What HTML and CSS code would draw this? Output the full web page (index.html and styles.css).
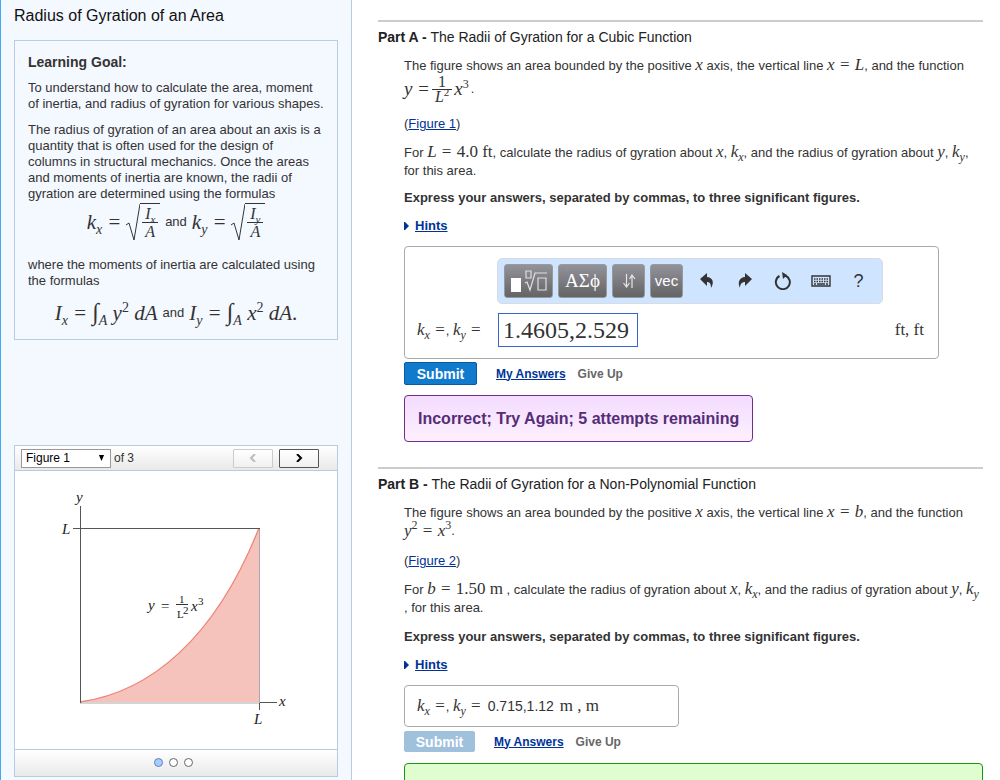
FILE: index.html
```html
<!DOCTYPE html>
<html lang="en">
<head>
<meta charset="utf-8">
<title>Radius of Gyration of an Area</title>
<link rel="stylesheet" href="styles.css">
</head>
<body>
<div class="app">
  <aside class="sidebar">
    <h1 class="title">Radius of Gyration of an Area</h1>
    <section class="goal">
      <h2 class="goal-title">Learning Goal:</h2>
      <p class="goal-text">To understand how to calculate the area, moment<br>of inertia, and radius of gyration for various shapes.</p>
      <p class="goal-text last">The radius of gyration of an area about an axis is a<br>quantity that is often used for the design of<br>columns in structural mechanics. Once the areas<br>and moments of inertia are known, the radii of<br>gyration are determined using the formulas</p>
      <div class="formula">
        <span class="math big"><i>k<sub>x</sub></i> <span class="rel">=</span></span>
        <span class="root"><svg class="radical" viewBox="0 0 14 38"><path d="M0 22l3-2 5 17L14 1" /></svg><span class="frac"><i>I<sub>x</sub></i><i>A</i></span></span>
        <span>and</span>
        <span class="math big"><i>k<sub>y</sub></i> <span class="rel">=</span></span>
        <span class="root"><svg class="radical" viewBox="0 0 14 38"><path d="M0 22l3-2 5 17L14 1" /></svg><span class="frac"><i>I<sub>y</sub></i><i>A</i></span></span>
      </div>
      <p class="goal-text">where the moments of inertia are calculated using<br>the formulas</p>
      <div class="formula integral">
        <span class="math big"><i>I<sub>x</sub></i> <span class="rel">=</span> <span class="int">∫</span><sub><i>A</i></sub> <i>y</i><sup>2</sup> <i>dA</i></span>
        <span>and</span>
        <span class="math big"><i>I<sub>y</sub></i> <span class="rel">=</span> <span class="int">∫</span><sub><i>A</i></sub> <i>x</i><sup>2</sup> <i>dA</i>.</span>
      </div>
    </section>

    <section class="figure">
      <div class="figure-bar">
        <span class="select-wrap">
          <select id="figure-select" aria-label="Figure"><option>Figure 1</option><option>Figure 2</option><option>Figure 3</option></select>
          <svg class="select-arrow" viewBox="0 0 8 7"><path d="M1 0h6L4 7z"/></svg>
        </span>
        <label for="figure-select">of 3</label>
        <button class="nav prev" type="button" disabled aria-label="Previous figure"><svg viewBox="0 0 8 8"><path d="M6 0L2 4l4 4"/></svg></button>
        <button class="nav" type="button" aria-label="Next figure"><svg viewBox="0 0 8 8"><path d="M2 0l4 4-4 4"/></svg></button>
      </div>
      <svg class="graph" viewBox="0 0 322 278">
        <path d="M65 231C135 221 200 168 244 57V231Z" fill="#f5c3bc"/>
        <path d="M65 232H245M244.500 57V232" fill="none" stroke="#aaa" stroke-width="1"/>
        <path d="M65 231C135 221 200 168 244 57" fill="none" stroke="#ee8477" stroke-width="1.300"/>
        <path d="M65.500 35V232M58 57.500H245M245 231.500H262M244.500 232V239" fill="none" stroke="#555"/>
        <g class="graph-text">
          <text x="61" y="31">y</text>
          <text x="47" y="63">L</text>
          <text x="264" y="235">x</text>
          <text x="239" y="253">L</text>
          <text x="133" y="139">y</text>
          <text x="145" y="140">=</text>
          <text x="176" y="140">x</text>
          <g class="graph-small">
            <text x="164" y="132">1</text>
            <text x="162" y="147">L</text>
            <text x="168" y="143">2</text>
            <text x="183" y="134">3</text>
          </g>
          <path d="M161 133.500H173" stroke="#333"/>
        </g>
      </svg>
      <div class="figure-dots"><button class="dot active" type="button" aria-label="Figure 1"></button><button class="dot" type="button" aria-label="Figure 2"></button><button class="dot" type="button" aria-label="Figure 3"></button></div>
    </section>
  </aside>

  <main class="content">
    <section class="part">
      <h2 class="part-title"><b>Part A -</b> The Radii of Gyration for a Cubic Function</h2>
      <div class="part-body">
        <p>The figure shows an area bounded by the positive <i class="math">x</i> axis, the vertical line <span class="math"><i>x</i> <span class="rel">=</span> <i>L</i></span>, and the function</p>
        <div class="equation tall"><span class="math mid"><i>y</i> <span class="rel">=</span></span><span class="frac narrow"><span>1</span><span><i>L</i><sup>2</sup></span></span><span class="math mid"><i>x</i><sup>3</sup></span>.</div>
        <p class="block">(<a href="#figure-select">Figure 1</a>)</p>
        <p class="block airy close">For <span class="math"><i>L</i> <span class="rel">=</span> 4.0 ft</span>, calculate the radius of gyration about <i class="math">x</i>, <i class="math">k<sub>x</sub></i>, and the radius of gyration about <i class="math">y</i>, <i class="math">k<sub>y</sub></i>,<br>for this area.</p>
        <p class="block"><b>Express your answers, separated by commas, to three significant figures.</b></p>
        <p class="block"><a class="hints" href="#hints-a"><svg viewBox="0 0 5 8"><path d="M0 0h1l4 4-4 4H0z"/></svg><span>Hints</span></a></p>
        <div class="answer">
          <div class="toolbar">
            <button class="tool wide" type="button" aria-label="Templates"><svg width="40" height="24" viewBox="0 0 40 24"><path d="M2 9h10v14H2z" fill="#fff"/><path d="M16 14l2-1 3 8 5-17h12M17 2h5v7h-5zM29 9h8v12h-8z" fill="none" stroke="#e0e0e0" stroke-width="1.200"/></svg></button>
            <button class="tool wide greek" type="button">ΑΣϕ</button>
            <button class="tool" type="button" aria-label="Symbols"><svg width="14" height="16" viewBox="0 0 14 16"><path d="M4.500 1v13M1.500 10l3 4 3-4M10 15V2M7.500 6L10 2l3 4" fill="none" stroke="#e6e6e6" stroke-width="1.200"/></svg></button>
            <button class="tool" type="button">vec</button>
            <button class="icon first" type="button" aria-label="Undo"><svg width="16" height="16" viewBox="0 0 16 16"><path d="M1 6l7-6v4c5 0 8 5 4 11 0-4-1-6-4-6v4z"/></svg></button>
            <button class="icon" type="button" aria-label="Redo"><svg width="16" height="16" viewBox="0 0 16 16"><path d="M15 6L8 0v4c-5 0-8 5-5 11 0-4 2-6 5-6v4z"/></svg></button>
            <button class="icon" type="button" aria-label="Reset"><svg width="18" height="18" viewBox="0 0 18 18"><path d="M11 3.500A7 7 0 1 1 5.500 4" fill="none" stroke="#333" stroke-width="2"/><path d="M8 0l5 3-4 4z"/></svg></button>
            <button class="icon" type="button" aria-label="Keyboard"><svg width="20" height="12" viewBox="0 0 20 12"><path d="M1 1h18v10H1z" fill="none" stroke="#333" stroke-width="1.400"/><path d="M3 4h14M3 6.500h14" fill="none" stroke="#333" stroke-width="1.500" stroke-dasharray="1.500 1"/><path d="M3 9h2M6 9h8M15 9h2" stroke="#333" stroke-width="1.500"/></svg></button>
            <button class="icon help" type="button" aria-label="Help">?</button>
          </div>
          <div class="answer-row">
            <label class="answer-label" for="answer-a"><span class="math"><i>k<sub>x</sub></i> <span class="rel">=</span></span>, <span class="math"><i>k<sub>y</sub></i> <span class="rel">=</span></span></label>
            <input id="answer-a" class="answer-input" type="text" value="1.4605,2.529">
            <span class="units math">ft, ft</span>
          </div>
        </div>
        <div class="actions">
          <button class="submit" type="button">Submit</button>
          <a class="my" href="#answers-a">My Answers</a>
          <a class="give" href="#give-up-a">Give Up</a>
        </div>
        <div class="feedback wrong">Incorrect; Try Again; 5 attempts remaining</div>
      </div>
    </section>

    <section class="part">
      <h2 class="part-title"><b>Part B -</b> The Radii of Gyration for a Non-Polynomial Function</h2>
      <div class="part-body">
        <p>The figure shows an area bounded by the positive <i class="math">x</i> axis, the vertical line <span class="math"><i>x</i> <span class="rel">=</span> <i>b</i></span>, and the function</p>
        <div class="equation"><span class="math"><i>y</i><sup>2</sup> <span class="rel">=</span> <i>x</i><sup>3</sup></span>.</div>
        <p class="block">(<a href="#figure-select">Figure 2</a>)</p>
        <p class="block airy">For <span class="math"><i>b</i> <span class="rel">=</span> 1.50 m</span> , calculate the radius of gyration about <i class="math">x</i>, <i class="math">k<sub>x</sub></i>, and the radius of gyration about <i class="math">y</i>, <i class="math">k<sub>y</sub></i><br>, for this area.</p>
        <p class="block"><b>Express your answers, separated by commas, to three significant figures.</b></p>
        <p class="block"><a class="hints" href="#hints-b"><svg viewBox="0 0 5 8"><path d="M0 0h1l4 4-4 4H0z"/></svg><span>Hints</span></a></p>
        <div class="answer done">
          <span class="answer-label"><span class="math"><i>k<sub>x</sub></i> <span class="rel">=</span></span>, <span class="math"><i>k<sub>y</sub></i> <span class="rel">=</span></span></span>
          <span class="value">0.715,1.12</span>
          <span class="math">m , m</span>
        </div>
        <div class="actions">
          <button class="submit" type="button" disabled>Submit</button>
          <a class="my" href="#answers-b">My Answers</a>
          <a class="give" href="#give-up-b">Give Up</a>
        </div>
        <div class="feedback right">Correct</div>
      </div>
    </section>
  </main>
</div>
</body>
</html>
```
FILE: styles.css
```css
* { box-sizing: border-box; }
body {
  margin: 0;
  background: #fff;
  color: #333;
  font-family: "Liberation Sans", Arial, sans-serif;
  font-size: 13px;
  line-height: 16px;
}
h1, h2, p { margin: 0; font-weight: normal; }
button, input, select { font: inherit; }
button { cursor: pointer; }
a { color: #039; }
sub, sup { font-size: 12px; line-height: 0; }
.app { display: flex; height: 100vh; overflow: hidden; }

.sidebar {
  display: flex;
  flex-direction: column;
  flex: 0 0 352px;
  padding: 6px 13px 3px 13px;
  background: #f4f8ff;
  border-left: 1px solid #3fa9f5;
  border-right: 1px solid #b9ccdf;
}
.title { font-size: 16px; line-height: 20px; color: #111; margin-bottom: 14px; }
.goal { border: 1px solid #b9ccdf; padding: 12px 13px; white-space: nowrap; }
.goal-title { font-size: 14px; font-weight: bold; line-height: 18px; margin-bottom: 9px; }
.goal-text { margin-bottom: 10px; }
.goal-text.last { margin-bottom: 0; }
.formula {
  display: flex;
  align-items: center;
  justify-content: center;
  gap: 5px;
  height: 40px;
  margin-bottom: 15px;
}
.formula.integral { height: 28px; margin-bottom: 0; }
.math { font-family: "Liberation Serif", "Times New Roman", serif; font-size: 17px; line-height: 16px; }
.math.mid { font-size: 19px; }
.math.big { font-size: 21px; }
.math.big sub, .math.big sup { font-size: 14px; }
.rel { padding: 0 1px; }
.int { font-size: 24px; line-height: 0; }
.root { display: flex; align-items: flex-start; }
.radical { width: 14px; height: 38px; fill: none; stroke: #333; }
.frac {
  display: inline-flex;
  flex-direction: column;
  align-items: center;
  font-family: "Liberation Serif", "Times New Roman", serif;
  font-size: 16px;
  line-height: 17px;
}
.root .frac { border-top: 1px solid #333; padding: 1px 2px 0; }
.root .frac > :last-child, .frac.narrow > :last-child { border-top: 1px solid #333; padding: 0 3px; }
.frac sub, .frac sup { font-size: 11px; }
.frac.narrow { line-height: 14px; }

.figure { margin-top: auto; border: 1px solid #b9ccdf; background: #fff; }
.figure-bar {
  display: flex;
  align-items: center;
  height: 25px;
  padding: 0 18px 0 6px;
  border-bottom: 1px solid #b9ccdf;
  background: linear-gradient(#fff, #e9e9e9);
  font-size: 12px;
}
.select-wrap { display: grid; width: 90px; margin-right: 3px; align-items: center; }
.select-wrap > * { grid-area: 1 / 1; }
.select-wrap select {
  appearance: none;
  width: 100%;
  height: 19px;
  padding: 0 4px;
  border: 1px solid #999;
  background: #fff;
  color: #000;
}
.select-arrow { width: 7px; height: 6px; justify-self: end; margin-right: 6px; pointer-events: none; }
.nav {
  display: flex;
  align-items: center;
  justify-content: center;
  width: 40px;
  height: 19px;
  margin-left: 6px;
  padding: 0;
  border: 1px solid #555;
  border-radius: 1px;
  background: linear-gradient(#fff, #f0f0f0);
}
.nav.prev { margin-left: auto; border-color: #ccc; }
.nav svg { width: 8px; height: 8px; fill: none; stroke: #000; stroke-width: 2; }
.nav.prev svg { stroke: #bbb; }
.graph { display: block; width: 100%; height: 278px; }
.graph-text { font: italic 15px "Liberation Serif", serif; fill: #222; }
.graph-small { font-size: 11px; font-style: normal; }
.figure-dots {
  display: flex;
  align-items: center;
  justify-content: center;
  gap: 6px;
  height: 27px;
  padding-right: 6px;
  padding-bottom: 2px;
  border-top: 1px solid #b9ccdf;
  background: linear-gradient(#fff, #e9e9e9);
}
.dot { width: 9px; height: 9px; padding: 0; border: 1px solid #666; border-radius: 50%; background: #fff; }
.dot.active { border-color: #5b82bd; background: #a9cdff; }

.content { flex: 1; min-width: 0; padding: 20px 17px 0 26px; }
.part { border-top: 2px solid #ccc; padding-top: 5px; margin-bottom: 25px; }
.part-title { font-size: 14px; line-height: 20px; color: #222; margin-bottom: 10px; }
.part-body { padding-left: 26px; white-space: nowrap; }
.part-body .block { margin-top: 12px; }
.part-body .airy { line-height: 18px; }
.part-body .close { margin-bottom: -2px; }
.equation { display: flex; align-items: center; height: 20px; }
.equation.tall { height: 30px; gap: 2px; }
.hints { display: inline-flex; align-items: center; gap: 6px; font-weight: bold; text-decoration: none; }
.hints span { text-decoration: underline; }
.hints svg { width: 5px; height: 8px; fill: #039; }

.answer { max-width: 535px; margin-top: 12px; padding: 11px 14px 11px 12px; border: 1px solid #aaa; border-radius: 4px; }
.answer.done { display: flex; align-items: center; gap: 6px; max-width: 275px; height: 42px; }
.value { font-size: 14px; }
.toolbar {
  display: flex;
  align-items: center;
  gap: 5px;
  width: 386px;
  height: 46px;
  margin-left: 80px;
  padding: 0 6px;
  border: 1px solid #d8dce2;
  border-radius: 5px;
  background: #cfe5ff;
}
.tool {
  display: flex;
  align-items: center;
  justify-content: center;
  width: 33px;
  height: 34px;
  padding: 0;
  border: 1px solid #999;
  border-radius: 3px;
  background: linear-gradient(#92929a, #646466);
  color: #fff;
  font-size: 15px;
}
.tool.wide { width: 49px; }
.tool.greek { font-family: "Liberation Serif", serif; font-size: 19px; }
.icon {
  display: flex;
  align-items: center;
  justify-content: center;
  width: 33px;
  height: 34px;
  padding: 0;
  border: 0;
  background: none;
  color: #333;
}
.icon.first { margin-left: 2px; }
.icon svg { fill: #333; }
.icon.help { font-size: 18px; }
.answer-row { display: flex; align-items: center; margin-top: 9px; }
.answer-row .answer-label { flex: 0 0 81px; }
.answer-input {
  width: 140px;
  height: 34px;
  padding: 0 4px;
  border: 1px solid #36c;
  color: #333;
  font-family: "Liberation Serif", serif;
  font-size: 24px;
}
.units { margin-left: auto; }
.actions { display: flex; align-items: center; height: 23px; margin-top: 3px; font-size: 12px; font-weight: bold; }
.submit {
  width: 73px;
  height: 23px;
  margin-right: 19px;
  padding: 0;
  border: 1px solid #0a5a9c;
  border-radius: 2px;
  background: #107acc;
  color: #fff;
  font-size: 14px;
}
.submit:disabled { width: 71px; height: 21px; border-color: #9fc1dc; background: #9fc1dc; }
.give { margin-left: 12px; color: #666; text-decoration: none; }
.feedback { margin-top: 10px; padding: 12px 13px; border: 1px solid; border-radius: 4px; font-size: 16px; font-weight: bold; line-height: 21px; }
.wrong { width: fit-content; border-color: #6f2d8c; background: linear-gradient(#f3dbfe, #fdf0ff); color: #552d76; }
.right { border-color: #189a10; background: #e0fdcf; color: #064d06; }
```
